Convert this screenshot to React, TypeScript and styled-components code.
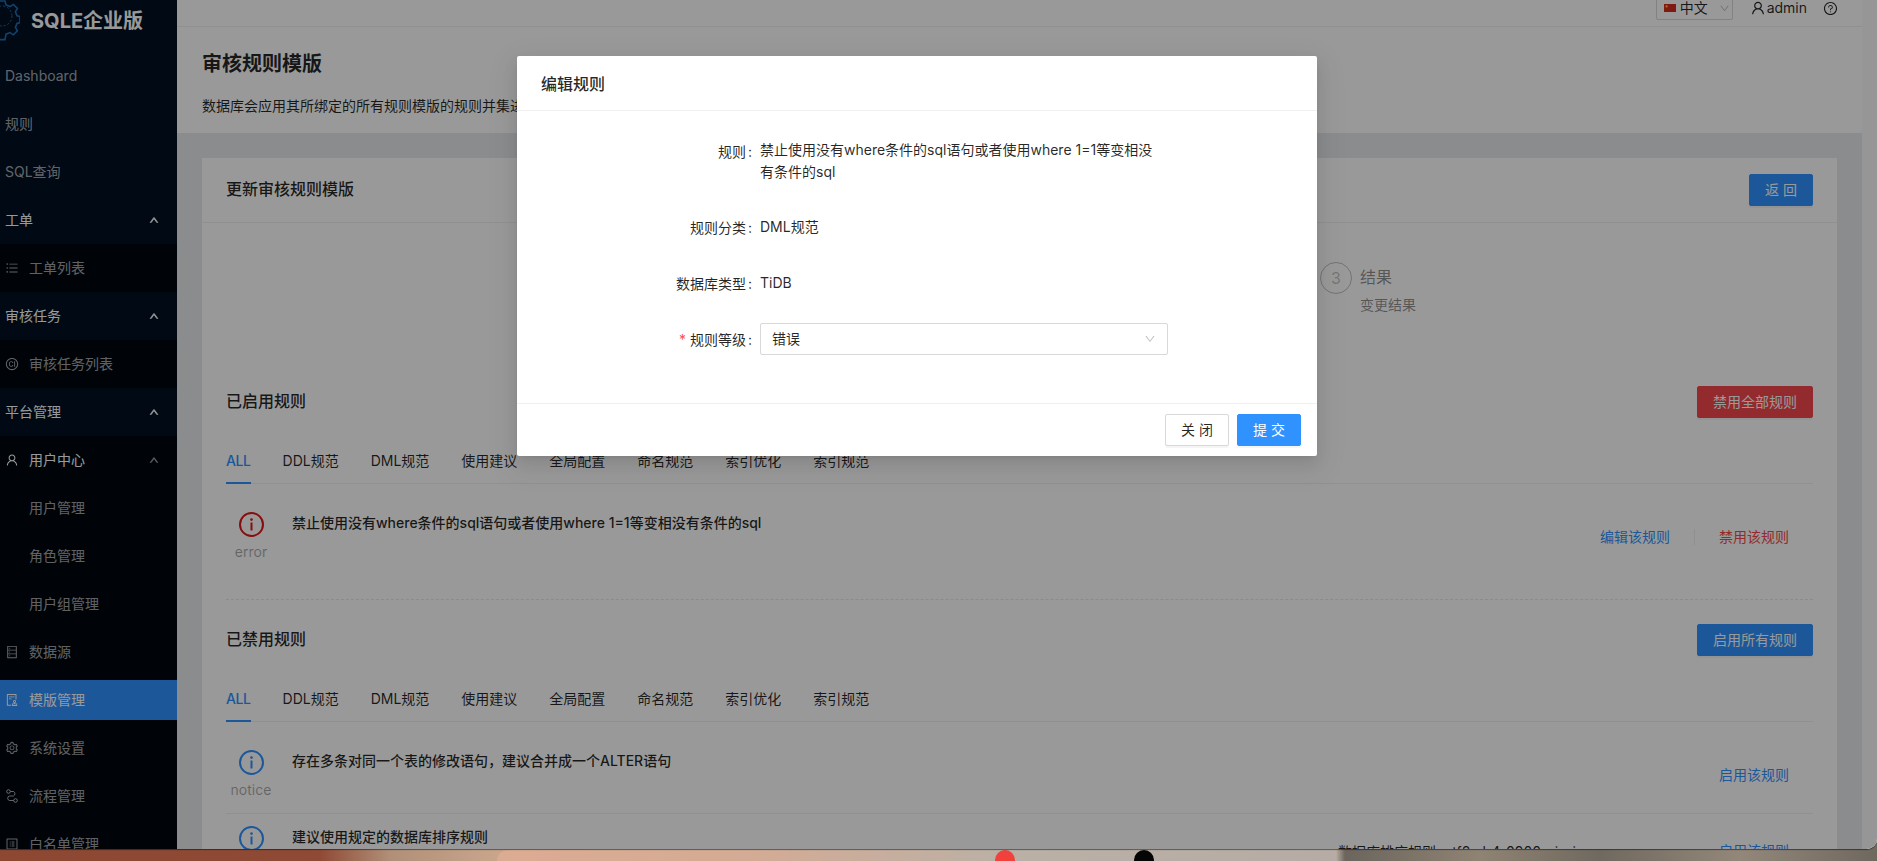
import styled, { createGlobalStyle } from "styled-components";
import {
	AiOutlineAudit,
	AiOutlineCi,
	AiOutlineDatabase,
	AiOutlineDown,
	AiOutlineProfile,
	AiOutlineQuestionCircle,
	AiOutlineSetting,
	AiOutlineUnorderedList,
	AiOutlineUp,
	AiOutlineUser,
} from "react-icons/ai";

const PRIMARY = "#3092ff";
const DANGER = "#f5474b";
const FONT = `Inter, "Noto Sans CJK SC", sans-serif`;

const GlobalStyle = createGlobalStyle`
	html, body {
		margin: 0;
		height: 100%;
		overflow: hidden;
		font-family: ${FONT};
		font-size: 14px;
		color: rgba(0, 0, 0, 0.85);
	}
	* {
		box-sizing: border-box;
	}
`;

const Screen = styled.div`
	width: 1877px;
	height: 861px;
	overflow: hidden;
	display: flex;
	flex-direction: column;
	background: linear-gradient(
		90deg,
		#8c4833 0,
		#8f4a35 320px,
		#b08f78 390px,
		#c9a58c 497px,
		#b9aca3 1336px,
		#6b655d 1345px,
		#8f8373 1480px,
		#70695f 1600px,
		#93877a 1740px,
		#6f685f 1877px
	);
`;

const Window = styled.div`
	position: relative;
	height: 849px;
	flex: none;
	display: flex;
	overflow: hidden;
	background: #fff;
	border-bottom-right-radius: 10px;
	box-shadow: 0 1px 1px rgba(0, 0, 0, 0.5);
`;

const Mask = styled.div`
	position: absolute;
	inset: 0;
	background: rgba(0, 0, 0, 0.4);
`;

const Sidebar = styled.aside`
	width: 177px;
	flex: none;
	display: flex;
	flex-direction: column;
	background: #001022;
	overflow: hidden;
`;

const Logo = styled.div`
	height: 52px;
	flex: none;
	display: flex;
	align-items: flex-start;
	padding-top: 8px;
	gap: 11px;
	font-size: 20px;
	line-height: 26px;
	font-weight: 700;
	color: #fff;
	svg {
		flex: none;
		margin-left: -12px;
		margin-top: -8px;
	}
`;

const SubMenu = styled.div<{ $fill?: boolean }>`
	display: flex;
	flex-direction: column;
	flex: ${(p) => (p.$fill ? "1 0 auto" : "none")};
	background: #000810;
`;

const MenuItem = styled.div<{ $indent?: number; $active?: boolean; $title?: boolean }>`
	height: 40px;
	flex: none;
	margin: 4px 0;
	display: flex;
	align-items: center;
	padding-left: ${(p) => p.$indent ?? 5}px;
	padding-right: 18px;
	line-height: 22px;
	white-space: nowrap;
	color: ${(p) => (p.$active || p.$title ? "#fff" : "rgba(255, 255, 255, 0.65)")};
	background: ${(p) => (p.$active ? PRIMARY : "transparent")};
	> svg:first-child {
		flex: none;
		margin-right: 10px;
		font-size: 14px;
	}
`;

const Caret = styled.span<{ $dim?: boolean }>`
	margin-left: auto;
	display: flex;
	font-size: 10px;
	color: ${(p) => (p.$dim ? "rgba(255, 255, 255, 0.45)" : "#fff")};
	svg {
		stroke-width: 90px;
	}
`;

const Main = styled.div`
	flex: 1;
	min-width: 0;
	display: flex;
`;

const Column = styled.div`
	flex: 1;
	min-width: 0;
	display: flex;
	flex-direction: column;
	background: #e8eaed;
`;

const ScrollTrack = styled.div`
	width: 15px;
	flex: none;
	background: #fbfbfb;
`;

const TopBar = styled.header`
	height: 27px;
	flex: none;
	display: flex;
	justify-content: flex-end;
	padding-right: 24px;
	background: #fff;
	border-bottom: 1px solid #f0f0f0;
`;

const TopBarTools = styled.div`
	display: flex;
	align-items: center;
	height: 32px;
	margin-top: -8px;
`;

const LangSelect = styled.div`
	width: 77px;
	height: 24px;
	display: flex;
	align-items: center;
	gap: 4px;
	padding-left: 7px;
	border: 1px solid #d9d9d9;
	border-radius: 2px;
	line-height: 22px;
	svg:last-child {
		margin-left: 7px;
		font-size: 11px;
		color: rgba(0, 0, 0, 0.25);
	}
`;

const UserName = styled.div`
	display: flex;
	align-items: center;
	margin-left: 17px;
	gap: 1px;
	line-height: 22px;
	svg {
		font-size: 16px;
	}
`;

const HelpIcon = styled(AiOutlineQuestionCircle)`
	margin-left: 16px;
	font-size: 15px;
`;

const PageHeader = styled.div`
	height: 106px;
	flex: none;
	padding: 23px 25px 0;
	background: #fff;
`;

const PageTitle = styled.h1`
	margin: 0 0 17px;
	font-size: 20px;
	line-height: 28px;
	font-weight: 600;
`;

const PageDesc = styled.p`
	margin: 0;
	line-height: 22px;
	white-space: nowrap;
`;

const Content = styled.div`
	flex: 1;
	min-height: 0;
	padding: 25px 25px 0;
`;

const Card = styled.section`
	background: #fff;
`;

const CardHead = styled.div`
	height: 65px;
	display: flex;
	align-items: center;
	justify-content: space-between;
	padding: 0 24px;
	border-bottom: 1px solid #f0f0f0;
`;

const CardTitle = styled.h2`
	margin: 0;
	padding-bottom: 2px;
	font-size: 16px;
	line-height: 24px;
	font-weight: 500;
`;

const CardBody = styled.div`
	padding: 39px 24px 0;
`;

const Button = styled.button<{ $kind?: "primary" | "danger" | "default" }>`
	height: 32px;
	padding: 0 15px;
	border-radius: 2px;
	font-family: inherit;
	font-size: 14px;
	line-height: 22px;
	white-space: nowrap;
	border: 1px solid
		${(p) => (p.$kind === "danger" ? DANGER : p.$kind === "default" ? "#d9d9d9" : PRIMARY)};
	background: ${(p) => (p.$kind === "danger" ? DANGER : p.$kind === "default" ? "#fff" : PRIMARY)};
	color: ${(p) => (p.$kind === "default" ? "rgba(0, 0, 0, 0.85)" : "#fff")};
	box-shadow: 0 2px 0 rgba(0, 0, 0, 0.04);
`;

const WideButton = styled(Button)`
	width: 64px;
	padding: 0;
	letter-spacing: 4px;
	text-indent: 4px;
`;

const Steps = styled.div`
	display: flex;
	gap: 8px;
	padding-left: 1094px;
	height: 54px;
	margin-bottom: 70px;
`;

const StepCircle = styled.div`
	width: 32px;
	height: 32px;
	flex: none;
	border: 1px solid rgba(0, 0, 0, 0.25);
	border-radius: 50%;
	display: flex;
	align-items: center;
	justify-content: center;
	font-size: 16px;
	color: rgba(0, 0, 0, 0.25);
`;

const StepTitle = styled.div`
	font-size: 16px;
	line-height: 30px;
	color: rgba(0, 0, 0, 0.45);
`;

const StepDesc = styled.div`
	margin-top: 2px;
	line-height: 22px;
	color: rgba(0, 0, 0, 0.45);
`;

const SectionHead = styled.div`
	height: 32px;
	display: flex;
	align-items: center;
	justify-content: space-between;
	margin-bottom: 20px;
`;

const Tabs = styled.div`
	display: flex;
	gap: 32px;
	height: 46px;
	margin-bottom: 16px;
	border-bottom: 1px solid #f0f0f0;
`;

const Tab = styled.div<{ $active?: boolean }>`
	padding-top: 12px;
	height: 46px;
	line-height: 22px;
	font-weight: ${(p) => (p.$active ? 500 : 400)};
	letter-spacing: ${(p) => (p.$active ? "-0.4px" : "normal")};
	color: ${(p) => (p.$active ? PRIMARY : "rgba(0, 0, 0, 0.85)")};
	border-bottom: 2px solid ${(p) => (p.$active ? PRIMARY : "transparent")};
`;

const RuleRow = styled.div<{ $line?: boolean }>`
	display: flex;
	align-items: center;
	height: ${(p) => (p.$line ? 76 : 75)}px;
	padding: 12px 0;
	border-bottom: ${(p) => (p.$line ? "1px solid #f0f0f0" : "none")};
`;

const RuleLevel = styled.div`
	width: 50px;
	flex: none;
	display: flex;
	flex-direction: column;
	align-items: center;
	align-self: flex-start;
	color: rgba(0, 0, 0, 0.35);
	line-height: 22px;
	svg {
		display: block;
		margin-bottom: 4px;
	}
`;

const RuleName = styled.div`
	flex: 1;
	margin-left: 16px;
	align-self: flex-start;
	line-height: 22px;
	font-weight: 500;
`;

const RuleExtra = styled.div`
	width: 357px;
	flex: none;
	line-height: 22px;
	white-space: nowrap;
`;

const RuleActions = styled.div`
	display: flex;
	align-items: center;
	flex: none;
	margin-bottom: 2px;
`;

const RuleLink = styled.a<{ $danger?: boolean; $split?: boolean }>`
	padding: 0 24px;
	line-height: 16px;
	color: ${(p) => (p.$danger ? DANGER : PRIMARY)};
	border-right: ${(p) => (p.$split ? "1px solid #f0f0f0" : "none")};
`;

const DashedLine = styled.div`
	margin: 24px 0;
	border-top: 1px dashed #e8e8e8;
`;

const ModalWrap = styled.div`
	position: absolute;
	inset: 0;
	padding: 56px 0 0 517px;
`;

const Modal = styled.div`
	width: 800px;
	height: 400px;
	display: flex;
	flex-direction: column;
	background: #fff;
	border-radius: 2px;
	box-shadow: 0 3px 6px -4px rgba(0, 0, 0, 0.12), 0 6px 16px rgba(0, 0, 0, 0.08),
		0 9px 28px 8px rgba(0, 0, 0, 0.05);
`;

const ModalHead = styled.div`
	height: 55px;
	flex: none;
	padding: 0 24px;
	display: flex;
	align-items: center;
	font-size: 16px;
	font-weight: 500;
	border-bottom: 1px solid #f0f0f0;
`;

const ModalBody = styled.div`
	flex: 1;
	padding-top: 24px;
	display: flex;
	flex-direction: column;
	gap: 24px;
`;

const FormRow = styled.div`
	display: grid;
	grid-template-columns: 243px 408px;
	min-height: 32px;
`;

const FormLabel = styled.label<{ $required?: boolean }>`
	height: 32px;
	display: flex;
	align-items: center;
	justify-content: flex-end;
	white-space: nowrap;
	&::before {
		content: ${(p) => (p.$required ? '"*"' : "none")};
		margin-right: 4px;
		color: #ff4d4f;
		font-size: 14px;
	}
	&::after {
		content: ":";
		margin: 0 8px 0 2px;
	}
`;

const FormValue = styled.div<{ $multi?: boolean }>`
	padding: ${(p) => (p.$multi ? "4px 8px 4px 0" : "5px 0")};
	line-height: 22px;
`;

const Select = styled.div`
	height: 32px;
	display: flex;
	align-items: center;
	justify-content: space-between;
	padding: 0 11px;
	border: 1px solid #d9d9d9;
	border-radius: 2px;
	line-height: 22px;
	svg {
		font-size: 12px;
		color: rgba(0, 0, 0, 0.25);
	}
`;

const ModalFoot = styled.div`
	height: 53px;
	flex: none;
	display: flex;
	justify-content: flex-end;
	align-items: center;
	gap: 8px;
	padding: 0 16px;
	border-top: 1px solid #f0f0f0;
`;

const Dock = styled.div`
	height: 12px;
	width: 839px;
	margin: 1px 0 0 497px;
	padding-left: 498px;
	display: flex;
	gap: 119px;
	overflow: hidden;
	border-radius: 14px 14px 0 0;
	background: linear-gradient(90deg, #dcab92 0, #d4ab95 30%, #bbb0a5 60%, #b7aca5 100%);
`;

const DockDot = styled.div<{ $color: string }>`
	width: 20px;
	height: 20px;
	flex: none;
	border-radius: 50%;
	background: ${(p) => p.$color};
`;

const tabNames = ["ALL", "DDL规范", "DML规范", "使用建议", "全局配置", "命名规范", "索引优化", "索引规范"];

const RuleTabs = () => (
	<Tabs>
		{tabNames.map((name, i) => (
			<Tab key={name} $active={i === 0}>
				{name}
			</Tab>
		))}
	</Tabs>
);

const InfoIcon = ({ color }: { color: string }) => (
	<svg width="25" height="25" viewBox="0 0 25 25" fill="none">
		<circle cx="12.5" cy="12.5" r="11.5" stroke={color} strokeWidth="2" />
		<circle cx="12.5" cy="7.6" r="1.3" fill={color} />
		<rect x="11.5" y="10.5" width="2" height="8" fill={color} />
	</svg>
);

const GearLogo = () => (
	<svg width="32" height="42" viewBox="0 0 32 42" fill="none" stroke="#1f6fb5" strokeWidth="1.6">
		<path d="M11 1 h6 l1 4 4 1.6 3.4-2.2 4 4-2 3.4 1.6 4 3 .8 v6 l-3 .8 -1.6 4 2 3.4 -4 4 -3.4-2.2 -4 1.6 -1 5.4 h-6" />
		<circle cx="14" cy="16" r="10" strokeDasharray="2 2" strokeWidth="1" />
		<path d="M2 30 v10 h8" />
	</svg>
);

const FlowIcon = () => (
	<svg width="14" height="14" viewBox="0 0 14 14" fill="none" stroke="currentColor" strokeWidth="1">
		<circle cx="3.5" cy="2.5" r="1.8" />
		<circle cx="10.5" cy="11.5" r="1.8" />
		<path d="M5.5 2.5 h3 a2.5 2.5 0 0 1 0 4.5 h-4 a2.3 2.3 0 0 0 0 4.5 h4" />
	</svg>
);

const Flag = () => (
	<svg width="12" height="8" viewBox="0 0 12 8">
		<rect width="12" height="8" fill="#d8281e" />
		<circle cx="2.6" cy="2.4" r="1.1" fill="#ffd83a" />
	</svg>
);

export default function App() {
	return (
		<Screen>
			<GlobalStyle />
			<Window>
				<Sidebar>
					<Logo>
						<GearLogo />
						<span>SQLE企业版</span>
					</Logo>
					<MenuItem>Dashboard</MenuItem>
					<MenuItem>规则</MenuItem>
					<MenuItem>SQL查询</MenuItem>
					<MenuItem $title>
						工单
						<Caret>
							<AiOutlineUp />
						</Caret>
					</MenuItem>
					<SubMenu>
						<MenuItem>
							<AiOutlineUnorderedList />
							工单列表
						</MenuItem>
					</SubMenu>
					<MenuItem $title>
						审核任务
						<Caret>
							<AiOutlineUp />
						</Caret>
					</MenuItem>
					<SubMenu>
						<MenuItem>
							<AiOutlineCi />
							审核任务列表
						</MenuItem>
					</SubMenu>
					<MenuItem $title>
						平台管理
						<Caret>
							<AiOutlineUp />
						</Caret>
					</MenuItem>
					<SubMenu $fill>
						<MenuItem $title>
							<AiOutlineUser />
							用户中心
							<Caret $dim>
								<AiOutlineUp />
							</Caret>
						</MenuItem>
						<MenuItem $indent={29}>用户管理</MenuItem>
						<MenuItem $indent={29}>角色管理</MenuItem>
						<MenuItem $indent={29}>用户组管理</MenuItem>
						<MenuItem>
							<AiOutlineDatabase />
							数据源
						</MenuItem>
						<MenuItem $active>
							<AiOutlineAudit />
							模版管理
						</MenuItem>
						<MenuItem>
							<AiOutlineSetting />
							系统设置
						</MenuItem>
						<MenuItem>
							<FlowIcon />
							流程管理
						</MenuItem>
						<MenuItem>
							<AiOutlineProfile />
							白名单管理
						</MenuItem>
					</SubMenu>
				</Sidebar>
				<Main>
					<Column>
						<TopBar>
							<TopBarTools>
								<LangSelect>
									<Flag />
									中文
									<AiOutlineDown />
								</LangSelect>
								<UserName>
									<AiOutlineUser />
									admin
								</UserName>
								<HelpIcon />
							</TopBarTools>
						</TopBar>
						<PageHeader>
							<PageTitle>审核规则模版</PageTitle>
							<PageDesc>数据库会应用其所绑定的所有规则模版的规则并集进行审核</PageDesc>
						</PageHeader>
						<Content>
							<Card>
								<CardHead>
									<CardTitle>更新审核规则模版</CardTitle>
									<WideButton>返回</WideButton>
								</CardHead>
								<CardBody>
									<Steps>
										<StepCircle>3</StepCircle>
										<div>
											<StepTitle>结果</StepTitle>
											<StepDesc>变更结果</StepDesc>
										</div>
									</Steps>
									<SectionHead>
										<CardTitle>已启用规则</CardTitle>
										<Button $kind="danger">禁用全部规则</Button>
									</SectionHead>
									<RuleTabs />
									<RuleRow>
										<RuleLevel>
											<InfoIcon color="#e01818" />
											error
										</RuleLevel>
										<RuleName>禁止使用没有where条件的sql语句或者使用where 1=1等变相没有条件的sql</RuleName>
										<RuleActions>
											<RuleLink $split>编辑该规则</RuleLink>
											<RuleLink $danger>禁用该规则</RuleLink>
										</RuleActions>
									</RuleRow>
									<DashedLine />
									<SectionHead>
										<CardTitle>已禁用规则</CardTitle>
										<Button>启用所有规则</Button>
									</SectionHead>
									<RuleTabs />
									<RuleRow $line>
										<RuleLevel>
											<InfoIcon color={PRIMARY} />
											notice
										</RuleLevel>
										<RuleName>存在多条对同一个表的修改语句，建议合并成一个ALTER语句</RuleName>
										<RuleActions>
											<RuleLink>启用该规则</RuleLink>
										</RuleActions>
									</RuleRow>
									<RuleRow>
										<RuleLevel>
											<InfoIcon color={PRIMARY} />
											notice
										</RuleLevel>
										<RuleName>建议使用规定的数据库排序规则</RuleName>
										<RuleExtra>数据库排序规则: utf8mb4_0900_ai_ci</RuleExtra>
										<RuleActions>
											<RuleLink>启用该规则</RuleLink>
										</RuleActions>
									</RuleRow>
								</CardBody>
							</Card>
						</Content>
					</Column>
					<ScrollTrack />
				</Main>
				<Mask />
				<ModalWrap>
					<Modal>
						<ModalHead>编辑规则</ModalHead>
						<ModalBody>
							<FormRow>
								<FormLabel>规则</FormLabel>
								<FormValue $multi>禁止使用没有where条件的sql语句或者使用where 1=1等变相没有条件的sql</FormValue>
							</FormRow>
							<FormRow>
								<FormLabel>规则分类</FormLabel>
								<FormValue>DML规范</FormValue>
							</FormRow>
							<FormRow>
								<FormLabel>数据库类型</FormLabel>
								<FormValue>TiDB</FormValue>
							</FormRow>
							<FormRow>
								<FormLabel $required>规则等级</FormLabel>
								<Select>
									错误
									<AiOutlineDown />
								</Select>
							</FormRow>
						</ModalBody>
						<ModalFoot>
							<WideButton $kind="default">关闭</WideButton>
							<WideButton>提交</WideButton>
						</ModalFoot>
					</Modal>
				</ModalWrap>
			</Window>
			<Dock>
				<DockDot $color="#f0413c" />
				<DockDot $color="#050505" />
			</Dock>
		</Screen>
	);
}
